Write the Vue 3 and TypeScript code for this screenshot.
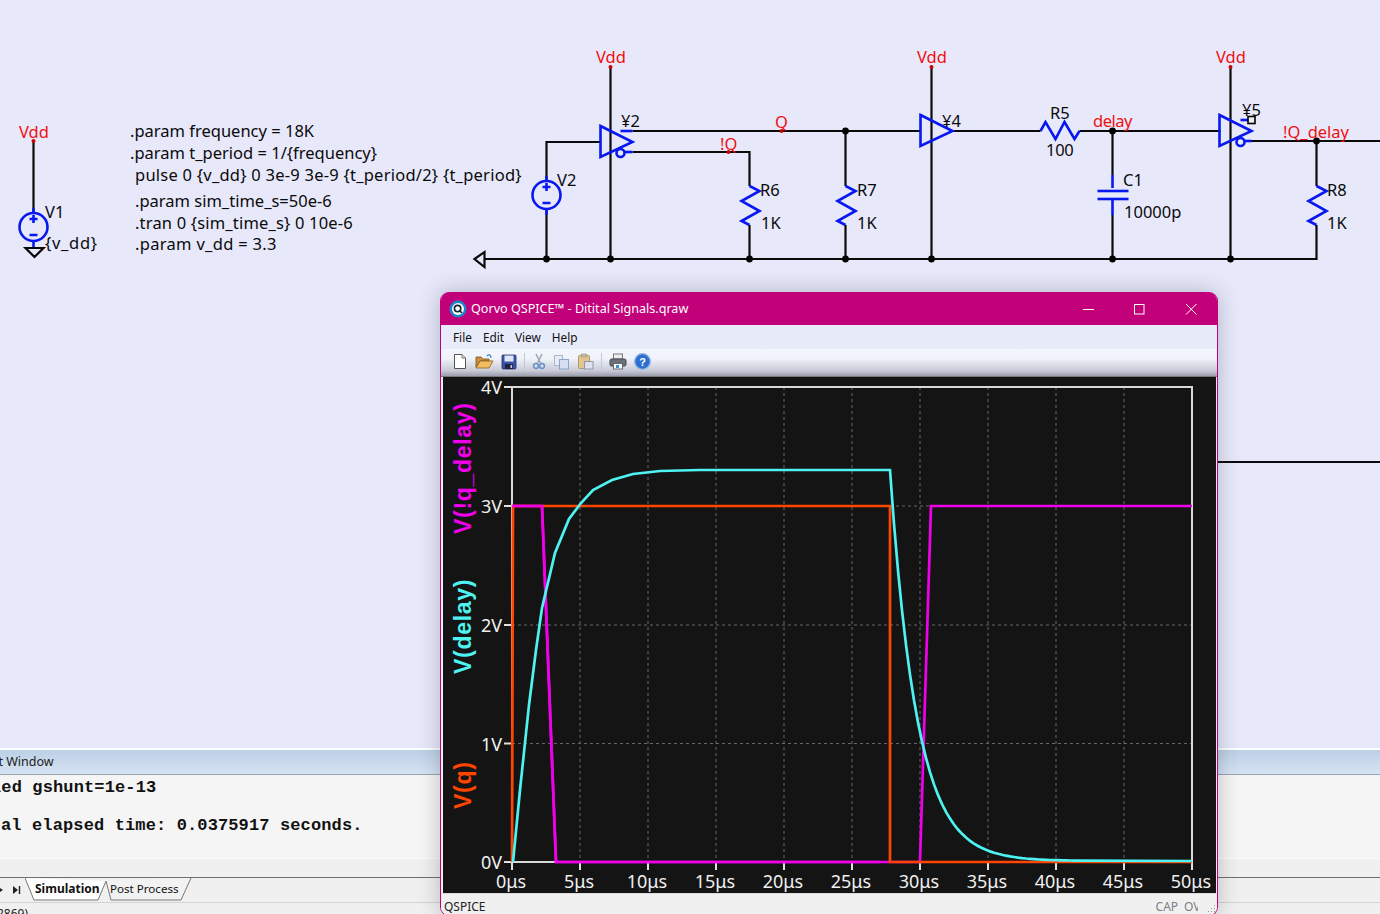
<script setup lang="ts">
const dots: [number, number][] = [
  [546, 259], [610, 259], [749, 259], [845, 259], [931, 259], [1112, 259], [1230, 259],
  [845, 131], [1112, 131], [1316, 141],
];
const wires = [
  "M484 259H1316V225", "M1316 186V141", "M1245 141H1380",
  "M610 67V259", "M931 67V259", "M1230 67V259", "M33 141V213",
  "M600 142H546V181", "M546 209V259",
  "M632 131H920", "M632 152H749V186", "M749 225V259", "M845 131V186", "M845 225V259",
  "M952 131H1040", "M1079 131H1220", "M1112 131V175", "M1112 215V259",
  "M1200 462H1380",
];
const zig = (x: number) =>
  `M${x} 186L${x + 10} 191L${x - 8} 201L${x + 10} 211L${x - 8} 221L${x} 225`;
const blue = [
  zig(749), zig(845), zig(1316),
  "M1040 131L1045 122L1055 139L1064 122L1074 139L1079 131",
  "M600 126L632 142L600 157Z", "M620 131H632", "M624 152H632",
  "M920 115L952 131L920 146Z",
  "M1219 115L1251 131L1219 146Z", "M1240 120H1250", "M1244 141H1251",
  "M1112 175V188", "M1097 191H1128", "M1097 199H1128", "M1112 199V215",
  "M546 176V181", "M546 209V215", "M33 208V213", "M33 241V247",
];
const sources: [number, number][] = [[546, 195], [33, 227]];
const pins: [number, number][] = [[33, 141], [610, 67], [931, 67], [1230, 67], [781, 131], [728, 152]];
const labels: { x: number; y: number; t: string; red?: boolean; ls?: number }[] = [
  { x: 19, y: 138, t: "Vdd", red: true },
  { x: 596, y: 63, t: "Vdd", red: true },
  { x: 917, y: 63, t: "Vdd", red: true },
  { x: 1216, y: 63, t: "Vdd", red: true },
  { x: 775, y: 128, t: "Q", red: true },
  { x: 720, y: 150, t: "!Q", red: true },
  { x: 1093, y: 127, t: "delay", red: true, ls: -0.5 },
  { x: 1283, y: 138, t: "!Q_delay", red: true },
  { x: 45, y: 218, t: "V1" },
  { x: 45, y: 249, t: "{v_dd}", ls: 0.7 },
  { x: 557, y: 186, t: "V2" },
  { x: 621, y: 127, t: "¥2" },
  { x: 942, y: 127, t: "¥4" },
  { x: 1242, y: 116, t: "¥5" },
  { x: 760, y: 196, t: "R6" },
  { x: 761, y: 229, t: "1K" },
  { x: 857, y: 196, t: "R7" },
  { x: 857, y: 229, t: "1K" },
  { x: 1327, y: 196, t: "R8" },
  { x: 1327, y: 229, t: "1K" },
  { x: 1050, y: 119, t: "R5" },
  { x: 1046, y: 156, t: "100", ls: -0.3 },
  { x: 1123, y: 186, t: "C1" },
  { x: 1124, y: 218, t: "10000p" },
  { x: 130, y: 137, t: ".param frequency = 18K" },
  { x: 130, y: 159, t: ".param t_period = 1/{frequency}" },
  { x: 135, y: 181, t: "pulse 0 {v_dd} 0 3e-9 3e-9 {t_period/2} {t_period}", ls: 0.24 },
  { x: 135, y: 207, t: ".param sim_time_s=50e-6" },
  { x: 135, y: 229, t: ".tran 0 {sim_time_s} 0 10e-6", ls: 0.18 },
  { x: 135, y: 250, t: ".param v_dd = 3.3", ls: 0.3 },
];

const menu = ["File", "Edit", "View", "Help"];

const xTicks = Array.from({ length: 11 }, (_, i) => ({ x: 512 + i * 68, t: `${i * 5}μs` }));
const yTicks = [
  { y: 387, t: "4V" }, { y: 506, t: "3V" }, { y: 625, t: "2V" }, { y: 743.5, t: "1V" }, { y: 862, t: "0V" },
];
const orange = "512,862 513,506 890,506 890,862 1192,862";
const magenta = "512,506 542,506 556,862 920,862 931,506 1192,506";
// discharge of the RC node after the falling edge, tau about 27px
const fall = Array.from({ length: 48 }, (_, i) => {
  const x = 890 + i * 4;
  return `${x},${(861 - 391 * Math.exp(-i * 4 / 27)).toFixed(1)}`;
}).join(" ");
const cyan =
  "513,862 520,790 529,705 536,650 542,608 555,553 569,519 581,503 593,490 612,480 633,474 660,471 700,470 " +
  fall + " 1192,861";
</script>

<template>
  <div class="page">
    <svg class="schematic" viewBox="0 0 1380 748" width="1380" height="748">
      <g transform="translate(0.5 0)">
        <path v-for="w in wires" :key="w" :d="w" class="wire" />
        <path v-for="b in blue" :key="b" :d="b" class="part" />
        <circle cx="620" cy="153" r="4" class="part" />
        <circle cx="1240" cy="142" r="4" class="part" />
        <g v-for="s in sources" :key="s[0]">
          <circle :cx="s[0]" :cy="s[1]" r="14" class="part" />
          <path :d="`M${s[0] - 4} ${s[1] - 8}h8M${s[0]} ${s[1] - 12}v8M${s[0] - 4} ${s[1] + 8}h8`" class="part" />
        </g>
        <path d="M25 248H43L34 257Z" class="outline" />
        <path d="M474 259L484 252V267Z" class="outline" />
        <circle v-for="d in dots" :key="d.join()" :cx="d[0]" :cy="d[1]" r="3.4" fill="#000" />
        <circle v-for="p in pins" :key="p.join()" :cx="p[0]" :cy="p[1]" r="2" fill="#c00" />
        <rect x="1247.5" y="116.5" width="7" height="7" fill="#eee" stroke="#000" stroke-width="1.6" />
      </g>
      <text
        v-for="l in labels"
        :key="l.t + l.x"
        :x="l.x"
        :y="l.y"
        :letter-spacing="l.ls"
        :class="['label', { red: l.red }]"
      >{{ l.t }}</text>
    </svg>

    <section class="panel">
      <header class="panel-head"><span>Output Window</span></header>
      <div class="output">
        <div class="out-line">Installed gshunt=1e-13</div>
        <div class="out-line second">Total elapsed time: 0.0375917 seconds.</div>
      </div>
      <div class="spacer"></div>
      <div class="tabs">
        <svg class="nav" width="22" height="10" viewBox="0 0 22 10">
          <path d="M-3 1L3 5L-3 9Z M13 1L18 5L13 9Z" fill="#222" />
          <path d="M19.5 1V9" stroke="#222" stroke-width="1.4" />
        </svg>
        <div class="tab active">
          <svg viewBox="0 0 82 23" width="82" height="23"><path d="M0 0L9 22H73L81 3" fill="#fff" stroke="#777" /></svg>
          <span>Simulation</span>
        </div>
        <div class="tab other">
          <svg viewBox="0 0 86 23" width="86" height="23"><path d="M0 3L5 22H75L85 0" fill="#f2f2f2" stroke="#777" /></svg>
          <span>Post Process</span>
        </div>
      </div>
      <div class="status"><span>Done (2869)</span></div>
    </section>

    <div class="scope-window">
      <div class="titlebar">
        <svg class="app-icon" width="18" height="18" viewBox="0 0 18 18">
          <circle cx="9" cy="9" r="8.5" fill="#1787c9" />
          <circle cx="9" cy="9" r="6" fill="#fff" />
          <circle cx="8.6" cy="8.6" r="3.2" fill="none" stroke="#123" stroke-width="1.6" />
          <path d="M10.5 10.5L13 13" stroke="#123" stroke-width="1.6" />
        </svg>
        <span class="title">Qorvo QSPICE™ - Ditital Signals.qraw</span>
        <div class="controls">
          <svg width="12" height="12" viewBox="0 0 12 12"><path d="M0 6.5H11" stroke="#fff" /></svg>
          <svg width="12" height="12" viewBox="0 0 12 12"><rect x="1.5" y="1.5" width="9.5" height="9.5" fill="none" stroke="#fff" /></svg>
          <svg width="12" height="12" viewBox="0 0 12 12"><path d="M1 1L11.5 11.5M11.5 1L1 11.5" stroke="#fff" /></svg>
        </div>
      </div>
      <nav class="menubar">
        <span v-for="m in menu" :key="m">{{ m }}</span>
      </nav>
      <div class="toolbar">
        <svg width="16" height="17" viewBox="0 0 16 17"><path d="M2.5 1.5H10L13.5 5V15.5H2.5Z" fill="#fff" stroke="#555" /><path d="M10 1.5V5H13.5" fill="#ddd" stroke="#777" /></svg>
        <svg width="19" height="17" viewBox="0 0 19 17"><path d="M1 14V4H6L8 6H14V8H5L1 14Z" fill="#c98f3a" stroke="#7a5518" stroke-width=".8" /><path d="M1 15L5 8H18L14 15Z" fill="#f0bd62" stroke="#8a6020" stroke-width=".8" /><path d="M12 3C14 1 16 2 16 5" fill="none" stroke="#3a7fc0" stroke-width="1.2" /></svg>
        <svg width="16" height="16" viewBox="0 0 16 16"><rect x="1" y="1" width="14" height="14" rx="1" fill="#3c52a8" stroke="#223070" stroke-width=".8" /><rect x="3.5" y="1.5" width="9" height="6" fill="#dfe6f5" /><rect x="4" y="10" width="8" height="5" fill="#1c2340" /><rect x="9.5" y="11" width="1.6" height="3" fill="#ccd" /></svg>
        <i class="sep"></i>
        <svg width="14" height="17" viewBox="0 0 14 17"><path d="M4 1L8.5 10M10 1L5.5 10" stroke="#98a4b4" stroke-width="1.5" /><circle cx="4" cy="13" r="2.4" fill="none" stroke="#6a90c8" stroke-width="1.5" /><circle cx="10" cy="13" r="2.4" fill="none" stroke="#6a90c8" stroke-width="1.5" /></svg>
        <svg width="17" height="16" viewBox="0 0 17 16"><rect x="1.5" y="1.5" width="8" height="10" fill="#e8ecf4" stroke="#a8b4c8" /><rect x="6.5" y="5.5" width="9" height="9.5" fill="#d4def0" stroke="#8ca4c8" /></svg>
        <svg width="17" height="17" viewBox="0 0 17 17"><rect x="1.5" y="2.5" width="11" height="13" rx="1" fill="#e2c690" stroke="#b09868" /><rect x="4.5" y="1" width="5" height="3" fill="#c8b89c" stroke="#998" stroke-width=".6" /><rect x="7.5" y="8.5" width="8.5" height="7.5" fill="#dde2ee" stroke="#8f99ac" /></svg>
        <i class="sep"></i>
        <svg width="18" height="17" viewBox="0 0 18 17"><rect x="4.5" y="1" width="9" height="5" fill="#eee" stroke="#777" /><rect x="1" y="6" width="16" height="7" rx="1.5" fill="#6b7079" stroke="#444a52" /><rect x="4.5" y="10.5" width="9" height="5.5" fill="#fff" stroke="#667" /><rect x="7" y="12" width="3" height="3" fill="#3a8fd0" /></svg>
        <svg width="17" height="17" viewBox="0 0 17 17"><circle cx="8.5" cy="8.5" r="7.8" fill="#2f6fce" stroke="#8fb5e8" stroke-width="1.2" /><text x="8.5" y="12.5" text-anchor="middle" class="help">?</text></svg>
      </div>
      <svg class="plot" viewBox="443 377 773 516" width="773" height="516">
        <rect x="443" y="377" width="773" height="516" fill="#141414" />
        <path v-for="t in xTicks.slice(1, 10)" :key="t.x" :d="`M${t.x} 387V862`" class="grid" />
        <path v-for="t in yTicks.slice(1, 4)" :key="t.y" :d="`M512 ${t.y}H1192`" class="grid" />
        <rect x="512" y="387" width="680" height="475" class="frame" />
        <path v-for="t in xTicks" :key="t.t" :d="`M${t.x} 862V870`" class="tick" />
        <path v-for="t in yTicks" :key="t.t" :d="`M504 ${t.y}H512`" class="tick" />
        <polyline :points="magenta" class="trace" stroke="#f000e8" />
        <polyline :points="orange" class="trace" stroke="#ff4500" />
        <polyline points="512,506 542,506 556,862 880,862" class="trace" stroke="#f000e8" />
        <polyline :points="cyan" class="trace" stroke="#4ef2f0" />
        <text v-for="t in xTicks" :key="t.t + 'l'" :x="t.x - 1" y="888" text-anchor="middle" class="axis">{{ t.t }}</text>
        <text v-for="t in yTicks" :key="t.t + 'l'" x="502" :y="t.y + 7" text-anchor="end" class="axis">{{ t.t }}</text>
        <text transform="translate(471 534) rotate(-90)" class="trace-name" fill="#f000e8">V(!q_delay)</text>
        <text transform="translate(471 674) rotate(-90)" class="trace-name" fill="#4ef2f0">V(delay)</text>
        <text transform="translate(471 809) rotate(-90)" class="trace-name" fill="#ff4500">V(q)</text>
      </svg>
      <footer class="statusbar">
        <span class="ready">QSPICE</span>
        <span class="ind cap">CAP</span>
        <span class="ind ovr">OVR</span>
        <svg class="grip" width="10" height="10" viewBox="0 0 10 10"><path d="M8 1h1v1H8zM5 4h1v1H5zM8 4h1v1H8zM2 7h1v1H2zM5 7h1v1H5zM8 7h1v1H8z" fill="#999" /></svg>
      </footer>
    </div>
  </div>
</template>

<style>
html,
body {
  margin: 0;
  overflow: hidden;
}
</style>

<style scoped>
.page {
  position: relative;
  width: 1380px;
  height: 914px;
  overflow: hidden;
  background: #e8e8fb;
  display: flex;
  flex-direction: column;
  font-family: "Noto Sans", sans-serif;
}
.schematic {
  display: block;
  flex: none;
}
.wire {
  fill: none;
  stroke: #0a0a0a;
  stroke-width: 2.2;
}
.part {
  fill: none;
  stroke: #0818f0;
  stroke-width: 2.6;
}
.outline {
  fill: none;
  stroke: #0a0a0a;
  stroke-width: 2.2;
}
.label {
  font-family: "Noto Sans", sans-serif;
  font-size: 16.5px;
  fill: #0a0a0a;
}
.label.red {
  fill: #f01010;
}

.panel {
  flex: 1;
  display: flex;
  flex-direction: column;
  border-top: 2px solid #fff;
  background: #f0f0f0;
  min-height: 0;
}
.panel-head {
  height: 24px;
  flex: none;
  background: linear-gradient(#bcd0e4, #d6e4f4);
  border-bottom: 1px solid #9aa4b0;
  font-size: 12.5px;
  line-height: 23px;
  color: #222;
  overflow: hidden;
}
.panel-head span {
  display: block;
  margin-left: -39px;
}
.output {
  height: 83px;
  flex: none;
  background: #f5f5f5;
  border-bottom: 1px solid #fbfbfb;
  font-family: "Liberation Mono", monospace;
  font-weight: 700;
  font-size: 17px;
  letter-spacing: 0.13px;
  color: #111;
  overflow: hidden;
  white-space: pre;
}
.out-line {
  line-height: 19px;
  margin-top: 3px;
  margin-left: -71px;
}
.out-line.second {
  margin-top: 19px;
  margin-left: -30px;
}
.spacer {
  height: 18px;
  flex: none;
  background: #f0f0f0;
  border-bottom: 1px solid #6f6f6f;
}
.tabs {
  height: 24px;
  flex: none;
  display: flex;
  align-items: flex-start;
  border-bottom: 1px solid #d2d2d2;
  font-size: 12px;
  color: #111;
}
.nav {
  margin: 7px 3px 0 0;
}
.tab {
  position: relative;
  line-height: 21px;
  height: 23px;
}
.tab svg {
  position: absolute;
  left: 0;
  top: 0;
}
.tab span {
  position: relative;
  white-space: nowrap;
}
.tab.active {
  width: 82px;
  font-weight: 700;
}
.tab.active span {
  left: 10px;
}
.tab.other {
  width: 86px;
  margin-left: -1px;
  font-size: 11.6px;
}
.tab.other span {
  left: 4px;
}
.status {
  flex: 1;
  font-size: 12px;
  line-height: 14px;
  padding-top: 4px;
  color: #222;
  overflow: hidden;
}
.status span {
  display: block;
  margin-left: -40px;
}

.scope-window {
  position: absolute;
  left: 440px;
  top: 292px;
  width: 778px;
  height: 624px;
  box-sizing: border-box;
  display: flex;
  flex-direction: column;
  border: solid #c2007a;
  border-width: 0 1.5px 1.5px;
  border-radius: 9px;
  overflow: hidden;
  background: #f0f0f0;
  box-shadow: 0 0 22px rgba(40, 40, 60, 0.28);
}
.titlebar {
  height: 33px;
  flex: none;
  background: #c2007a;
  display: flex;
  align-items: center;
  padding-left: 8px;
  color: #fff;
}
.app-icon {
  margin-right: 4px;
}
.title {
  font-size: 12.6px;
}
.controls {
  margin-left: auto;
  display: flex;
  gap: 40px;
  padding-right: 20px;
}
.controls svg:first-child {
  margin-right: -2px;
}
.menubar {
  height: 24px;
  flex: none;
  background: #e8ebfa;
  display: flex;
  align-items: center;
  gap: 11px;
  padding-left: 12px;
  font-size: 11.8px;
  color: #111;
}
.toolbar {
  height: 28px;
  flex: none;
  box-sizing: border-box;
  background: linear-gradient(#f3f5fc 0%, #f1f3fa 35%, #c8cad6 80%, #9c9eae 100%);
  border-bottom: 1px solid #777;
  display: flex;
  align-items: center;
  gap: 7px;
  padding-left: 11px;
  padding-bottom: 2px;
}
.sep {
  width: 1px;
  height: 18px;
  background: #c4c6d2;
}
.help {
  font: 700 11px "Liberation Sans", sans-serif;
  fill: #fff;
}
.plot {
  display: block;
  flex: none;
  margin-left: 1.5px;
}
.grid {
  stroke: #666;
  stroke-width: 1;
  stroke-dasharray: 3 3;
  fill: none;
}
.frame {
  fill: none;
  stroke: #d8d8d8;
  stroke-width: 2;
}
.tick {
  stroke: #e0e0e0;
  stroke-width: 2;
}
.trace {
  fill: none;
  stroke-width: 2.7;
}
.axis {
  font-family: "Noto Sans", sans-serif;
  font-size: 18px;
  fill: #f0f0f0;
}
.trace-name {
  font-family: "Liberation Sans", sans-serif;
  font-weight: 700;
  font-size: 23px;
  letter-spacing: 0.7px;
}
.statusbar {
  flex: 1;
  position: relative;
  display: flex;
  align-items: flex-start;
  background: #f0f0f0;
  border-top: 1px solid #ddd;
  font-size: 12px;
  line-height: 26px;
  color: #222;
  overflow: hidden;
}
.ready {
  margin-left: 3px;
}
.ind {
  color: #7a8088;
  margin-left: auto;
}
.cap {
  margin-left: 670px;
}
.ovr {
  margin-left: 6px;
  width: 14px;
  overflow: hidden;
  padding-left: 0;
}
.grip {
  position: absolute;
  right: 1px;
  bottom: 1px;
}
</style>
